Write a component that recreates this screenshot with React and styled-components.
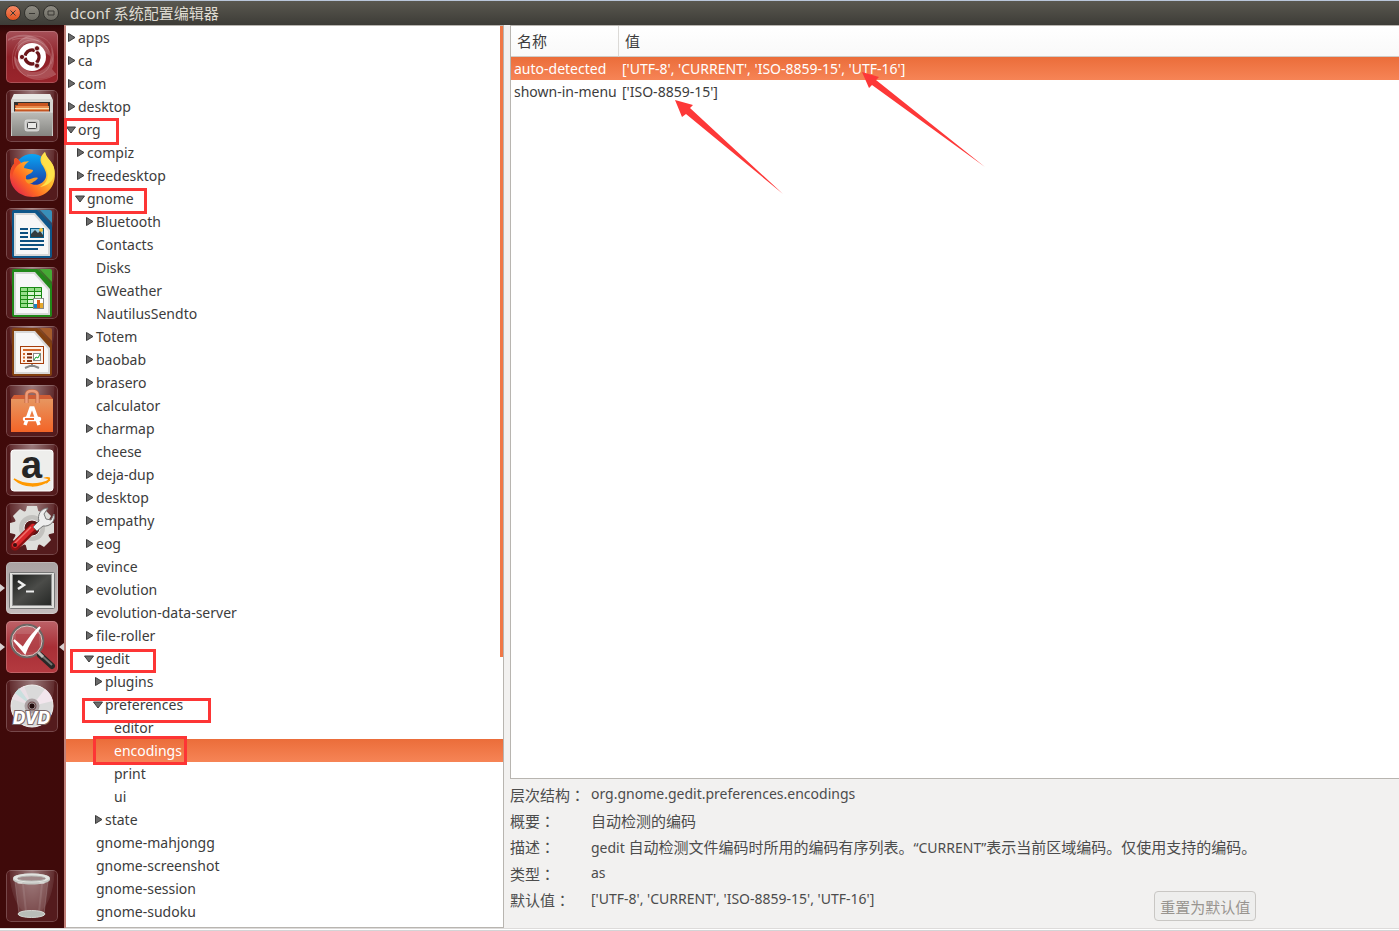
import React, { useState } from "react";
import styled, { createGlobalStyle } from "styled-components";

const GlobalStyle = createGlobalStyle`
  * {
    box-sizing: border-box;
  }
  body {
    margin: 0;
    font-family: "Noto Sans", "Noto Sans CJK SC", sans-serif;
    font-size: 14px;
    color: #3c3c3c;
    background-color: #f2f1f0;
  }
  button {
    font-family: inherit;
  }
`;

const Desktop = styled.div`
  position: relative;
  display: flex;
  flex-direction: column;
  height: 100vh;
  overflow: hidden;
`;

const TitleBar = styled.header`
  display: flex;
  align-items: center;
  flex-shrink: 0;
  gap: 3px;
  height: 25px;
  padding-left: 5px;
  border-top: 1px solid #b9c6da;
  background: linear-gradient(#5a5850, #3d3c37);
`;

const WindowButton = styled.button`
  display: flex;
  align-items: center;
  justify-content: center;
  width: 16px;
  height: 16px;
  padding: 0;
  border: 1px solid #33322e;
  border-radius: 50%;
  color: #3a3834;
  background: ${(props) =>
    props.$close
      ? "linear-gradient(#f58a66, #e2521f)"
      : "linear-gradient(#8f8c83, #6c6a62)"};
`;

const Title = styled.h1`
  margin: 0;
  padding-left: 8px;
  font-size: 15px;
  font-weight: 400;
  line-height: 24px;
  color: #dfdbd2;
`;

const Body = styled.div`
  display: flex;
  flex: 1;
  min-height: 0;
`;

const Launcher = styled.nav`
  display: flex;
  flex-direction: column;
  flex-shrink: 0;
  gap: 7px;
  width: 66px;
  padding: 6px;
  border-right: 2px solid #c08078;
  background: linear-gradient(#2c0707, #400a0a 8px, #3f0a0a);
`;

const LauncherItem = styled.button`
  position: relative;
  display: block;
  flex-shrink: 0;
  width: 52px;
  height: 52px;
  margin-top: ${(props) => (props.$last ? "auto" : "0")};
  padding: 0;
  border: none;
  border-radius: 5px;
  background: ${(props) => props.$tint};
  box-shadow: inset 0 0 0 1px rgba(255, 255, 255, 0.2);

  svg {
    display: block;
  }
`;

const Pip = styled.span`
  position: absolute;
  top: 22px;
  ${(props) => props.$side}: -6px;
  border: 4px solid transparent;
  border-width: 4px 5px;
  border-${(props) => props.$side}-color: #d8d0d0;
  border-${(props) => (props.$side === "left" ? "right" : "left")}-width: 0;
`;

const TreePane = styled.section`
  position: relative;
  width: 438px;
  flex-shrink: 0;
  border: solid #b8b5b0;
  border-width: 1px 1px 1px 0;
  background-color: #ffffff;
  overflow: hidden;
`;

const TreeList = styled.ul`
  margin: 0;
  padding: 0;
  list-style: none;
`;

const TreeRow = styled.button`
  display: flex;
  align-items: center;
  gap: 2px;
  width: 100%;
  height: 23px;
  padding: 0 0 0 ${(props) => 1 + props.$level * 9}px;
  border: none;
  font-size: 14px;
  line-height: 23px;
  text-align: left;
  color: ${(props) => (props.$selected ? "#ffffff" : "#3c3c3c")};
  background: ${(props) =>
    props.$selected ? "linear-gradient(#eb6d3a, #f68456)" : "transparent"};
`;

const Expander = styled.svg`
  width: 9px;
  height: 11px;
  flex-shrink: 0;
  overflow: visible;
`;

const ScrollThumb = styled.div`
  position: absolute;
  top: 0;
  right: 0;
  width: 3px;
  height: 70%;
  background-color: #f07746;
`;

const Content = styled.main`
  display: flex;
  flex-direction: column;
  flex: 1;
  min-width: 0;
  padding-left: 6px;
`;

const TablePane = styled.section`
  flex: 1;
  border: solid #b8b5b0;
  border-width: 1px 0 1px 1px;
  background-color: #ffffff;
`;

const KeyTable = styled.table`
  width: 100%;
  border-collapse: separate;
  border-spacing: 0;
  table-layout: fixed;
`;

const HeadCell = styled.th`
  width: ${(props) => props.$width || "auto"};
  height: 31px;
  padding: 0 6px;
  border-bottom: 1px solid #cfccc8;
  border-right: ${(props) => (props.$width ? "1px solid #dcdad7" : "none")};
  font-size: 15px;
  font-weight: 400;
  line-height: 30px;
  text-align: left;
  background: linear-gradient(#ffffff, #f9f9f9);
`;

const KeyRow = styled.tr`
  color: ${(props) => (props.$selected ? "#ffffff" : "#3c3c3c")};
  background: ${(props) =>
    props.$selected ? "linear-gradient(#eb6d3a, #f68456)" : "transparent"};
`;

const Cell = styled.td`
  height: 23px;
  padding: 0 3px;
  line-height: 23px;
  white-space: nowrap;
`;

const Details = styled.dl`
  display: grid;
  grid-template-columns: 81px max-content;
  margin: 0;
  padding: 3px 0 7px;
  font-size: 15px;
  line-height: 26px;
  color: #4c4c4c;
`;

const Term = styled.dt`
  margin: 0;
`;

// the TC face centres the fullwidth colon in its box
const Colon = styled.span`
  font-family: "Noto Sans CJK TC", sans-serif;
`;

const Value = styled.dd`
  margin: 0;
`;

const LatinValue = styled(Value)`
  display: flex;
  align-items: flex-start;
  justify-content: space-between;
  font-size: 14px;
  line-height: 24px;
`;

const Latin = styled.span`
  font-size: 14px;
`;

const ResetButton = styled.button`
  height: 30px;
  margin-top: 4px;
  padding: 0 5px;
  border: 1px solid #c9c7c4;
  border-radius: 4px;
  font-size: 15px;
  color: #98948f;
  background-color: #eeeeed;
`;

const BottomEdge = styled.footer`
  flex-shrink: 0;
  height: 3px;
  border-top: 1px solid #dddbda;
  border-bottom: 1px solid #d4d4d6;
  background-color: #ffffff;
`;

const Marks = styled.svg`
  position: absolute;
  top: 0;
  left: 0;
  width: 100%;
  height: 100%;
  pointer-events: none;
`;

const UbuntuIcon = () => (
  <svg width="52" height="52" viewBox="0 0 52 52">
    <g fill="none" stroke="#f4c8c8">
      <path d="M8 38C2 18 14 4 30 5c14 1 21 15 15 28" strokeOpacity=".2" />
      <path d="M6 9c20-6 38 3 39 18 0 13-11 20-24 17" strokeOpacity=".25" />
      <path d="M50 43C32 55 10 46 9 27 9 14 20 6 33 10" strokeOpacity=".25" />
    </g>
    <path d="M2 8C18-2 43 6 44 25L37 20C30 8 17 8 12 22 10 12 14 7 20 6 13 5 7 7 2 10z" fill="#fff" opacity=".2" />
    <path d="M50 43C31 54 6 45 8 25l6 6c4 12 20 14 29 2 3-8 4-16-1-22 6 8 8 18 4 27z" fill="#fff" opacity=".2" />
    <circle cx="26" cy="26" r="14" fill="#fff" />
    <circle cx="26" cy="26" r="7" fill="none" stroke="#6b1418" strokeWidth="3.4" strokeDasharray="12.66 2" strokeDashoffset="-1" transform="rotate(-60 26 26)" />
    <g fill="#6b1418" stroke="#fff" strokeWidth=".8">
      <circle cx="16" cy="26" r="2.6" />
      <circle cx="31" cy="17.3" r="2.6" />
      <circle cx="31" cy="34.7" r="2.6" />
    </g>
  </svg>
);

const FilesIcon = () => (
  <svg width="52" height="52" viewBox="0 0 52 52">
    <defs>
      <linearGradient id="cab" x2="0" y2="1">
        <stop stopColor="#bcbcb8" />
        <stop offset="1" stopColor="#858581" />
      </linearGradient>
    </defs>
    <path d="M8 4h36l3 6v36H5V10z" fill="#d5d5d1" />
    <path d="M8 4h36l2 5H6z" fill="#e9e9e6" />
    <rect x="8" y="12" width="36" height="14" fill="#33302e" />
    <path d="M12 13h30v8H9v-6h3z" fill="#c9551f" />
    <path d="M10 16h33v7H10z" fill="#e98b4d" />
    <path d="M9 18h34v1H9z" fill="#f9ddaa" />
    <path d="M9 20h34v2H9z" fill="#c45522" />
    <path d="M7 22h38l2 1-1 23H6L5 23z" fill="url(#cab)" />
    <path d="M6 22h40" stroke="#ddd" />
    <rect x="19" y="30" width="14" height="11" rx="2" fill="#c9c9c6" stroke="#eee" strokeWidth=".7" />
    <rect x="21.500" y="32.500" width="9" height="6" rx="1" fill="#e9e9e7" stroke="#484848" />
  </svg>
);

const FirefoxIcon = () => (
  <svg width="52" height="52" viewBox="0 0 52 52">
    <defs>
      <linearGradient id="fox" x1=".95" y1=".1" x2=".1" y2=".9">
        <stop stopColor="#fff35a" />
        <stop offset=".4" stopColor="#ffb52c" />
        <stop offset=".7" stopColor="#ff6a22" />
        <stop offset="1" stopColor="#e3254a" />
      </linearGradient>
      <linearGradient id="globe" x2="0" y2="1">
        <stop stopColor="#0aa6f5" />
        <stop offset="1" stopColor="#1b2d9b" />
      </linearGradient>
    </defs>
    <circle cx="26" cy="23" r="18" fill="url(#globe)" />
    <path d="M9 9c2 0 5 3 6 5 3-2 5-1 8-2-3 3-5 4-5 7 3 1 6 1 9 2 0 3-5 4-7 6 0 3 0 5 3 7 7 4 15 1 17-6 1-4-1-7-3-11-4-5-3-10 2-14 1 6 7 9 9 16 4 16-6 29-21 29C12 48 3 37 4 25c0-5 2-8 4-10 0-2 0-4 1-6z" fill="url(#fox)" />
    <path d="M9 9c2 0 5 3 6 5-5 2-8 8-9 14-2-6-1-10 2-13 0-2 0-4 1-6z" fill="#f14b26" />
    <path d="M39 3c-4 6-4 10 0 15 5 8 3 16-5 20 13-2 17-13 13-22-3-6-7-7-8-13z" fill="#ffe24a" />
    <path d="M19 30c5 2 9-3 13-1-2 3-4 3-6 5-3 2-6 0-7-4z" fill="#f59b25" />
  </svg>
);

const DocumentIcon = ({ color, dark, children }) => (
  <svg width="52" height="52" viewBox="0 0 52 52">
    <path d="M8 2h23l15 16v30a2 2 0 0 1-2 2H8a2 2 0 0 1-2-2V4a2 2 0 0 1 2-2z" fill={dark} />
    <path d="M30 2h4l12 13v5z" fill={dark} opacity=".7" />
    <path d="M8 5h21l15 17v26H8z" fill="#d8d8d8" />
    <path d="M10 7h18l14 16v23H10z" fill="#f7f7f7" />
    <path d="M34 2h10a2 2 0 0 1 2 2v11z" fill={color} />
    <g transform="translate(-6 0)">{children}</g>
  </svg>
);

const WriterIcon = () => (
  <DocumentIcon color="#388fba" dark="#0e5689">
    <path d="M20 21h8M20 25h8M20 29h8M20 33h24M20 37h24M20 41h18" stroke="#0d5080" strokeWidth="2" />
    <rect x="30.500" y="20.500" width="13" height="9" fill="#96cae2" stroke="#075b87" />
    <circle cx="41" cy="22" r="2" fill="#f0c143" />
    <path d="M31 29v-3l4-4 3 3 2-2 3 4v2z" fill="#343c3e" />
  </DocumentIcon>
);

const CalcIcon = () => (
  <DocumentIcon color="#45aa35" dark="#218819">
    <path d="M20 20h22v21H20z" fill="#d8f5d2" />
    <path d="M20 20h22v4H20zM20 24h7v17h-7z" fill="#96dd89" />
    <path d="M20.500 20.500h21v20h-21zM20 24.500h22M20 28.500h22M20 32.500h22M20 36.500h22M27.500 20v21M34.500 20v21" fill="none" stroke="#198913" />
    <rect x="33.500" y="31.500" width="10" height="10" fill="#fff" stroke="#888" />
    <path d="M34 37h3v4h-3z" fill="#1685c5" />
    <path d="M37 33h3v8h-3z" fill="#d75c16" />
    <path d="M40 36h3v5h-3z" fill="#e5a92e" />
  </DocumentIcon>
);

const ImpressIcon = () => (
  <DocumentIcon color="#a65c2b" dark="#824010">
    <rect x="20.500" y="20.500" width="23" height="17" fill="#fff2e8" stroke="#a53d0b" />
    <path d="M23 24h18" stroke="#d36829" strokeWidth="2" />
    <path d="M23 28h2M23 31.500h2M23 35h2" stroke="#d36829" strokeWidth="2" />
    <path d="M27 28h5M27 31.500h5M27 35h5" stroke="#813414" strokeWidth="2" />
    <rect x="33.500" y="27.500" width="7" height="7" fill="#fff" stroke="#888" />
    <path d="m34 34 2-3 2 1 2-4" fill="none" stroke="#15a52a" />
    <path d="M32 38v3M25 42l7-3 7 3" fill="none" stroke="#888" strokeWidth="2" />
  </DocumentIcon>
);

const SoftwareIcon = () => (
  <svg width="52" height="52" viewBox="0 0 52 52">
    <defs>
      <linearGradient id="bag" x2="0" y2="1">
        <stop stopColor="#e79660" />
        <stop offset="1" stopColor="#f36427" />
      </linearGradient>
    </defs>
    <path d="M5 14 8 10h36l3 4z" fill="#d05d35" />
    <path d="M5 14h42v33H5z" fill="url(#bag)" />
    <path d="M20.500 18V10q0-4 5.500-4t5.500 4v8" fill="none" stroke="#bc6544" strokeWidth="4" />
    <path d="M20.500 18V10q0-4 5.500-4t5.500 4v8" fill="none" stroke="#ef9c78" strokeWidth="2.500" />
    <path d="m19 40 6-17h2l6 17" fill="none" stroke="#fff" strokeWidth="3.500" />
    <path d="M19 34h14" stroke="#fff" strokeWidth="4.500" strokeLinecap="round" />
    <path d="M19 34h9" stroke="#ef6b32" strokeWidth="2" />
  </svg>
);

const LetterA = styled.text`
  font-family: "Liberation Sans", sans-serif;
  font-size: 38px;
  font-weight: 700;
`;

const AmazonIcon = () => (
  <svg width="52" height="52" viewBox="0 0 52 52">
    <rect x="5" y="6" width="42" height="41" rx="3" fill="#eeeeec" stroke="#fff" />
    <LetterA x="15" y="34" fill="#252525">
      a
    </LetterA>
    <path d="M8 35c10 9 25 9 36 1-10 5-25 6-36-1z" fill="#ff9900" stroke="#ff9900" strokeWidth="1.500" />
    <path d="M37 34c5-2 8-1 7 1s-2 4-4 5l2-5z" fill="#ff9900" />
  </svg>
);

const SettingsIcon = () => (
  <svg width="52" height="52" viewBox="0 0 52 52">
    <g transform="translate(26 25)" fill="#dededb">
      {[0, 45, 90, 135, 180, 225, 270, 315].map((angle) => (
        <path key={angle} d="m-5-22h10l2 8h-14z" transform={`rotate(${angle})`} />
      ))}
      <circle r="18" />
      <circle r="13" fill="#c2c1be" />
      <circle r="8" fill="#571718" stroke="#eee" />
    </g>
    <path d="m9 43 18-18" stroke="#8c1012" strokeWidth="9" strokeLinecap="round" />
    <path d="m9 42 18-18" stroke="#d9272b" strokeWidth="6" strokeLinecap="round" />
    <path d="m8 41 17-17" stroke="#f0726d" strokeWidth="1.500" />
    <path d="m27 24 6-6c-2-6 2-13 9-13l-4 6 2 5 5 1 3-6c2 7-4 13-11 12l-6 5z" fill="#eee" stroke="#777" />
    <circle cx="9" cy="42" r="2" fill="#3f1010" />
  </svg>
);

const TerminalIcon = () => (
  <svg width="52" height="52" viewBox="0 0 52 52">
    <defs>
      <linearGradient id="term" x2="1" y2="1">
        <stop stopColor="#1c1e1c" />
        <stop offset=".5" stopColor="#4b4c49" />
        <stop offset="1" stopColor="#252725" />
      </linearGradient>
    </defs>
    <rect x="3.500" y="10.500" width="45" height="36" rx="1" fill="#e1e1de" stroke="#777" />
    <rect x="6.500" y="12.500" width="39" height="31" fill="url(#term)" stroke="#929292" />
    <path d="m12 19 6 4-6 4" fill="none" stroke="#eee" strokeWidth="2.500" />
    <path d="M20 29.500h8" stroke="#eee" strokeWidth="2" />
  </svg>
);

const DconfIcon = () => (
  <svg width="52" height="52" viewBox="0 0 52 52">
    <path d="M10 13h23v18H10z" fill="#a51f28" opacity=".6" />
    <circle cx="21" cy="20" r="16" fill="#fff" fillOpacity=".12" stroke="#6d6664" strokeWidth="2.500" />
    <circle cx="21" cy="20" r="15" fill="none" stroke="#d8c5c2" />
    <path d="m8 19 9 8c5-8 10-15 17-21-8 11-12 18-15 26z" fill="#fff" stroke="#fff" strokeWidth="2" />
    <path d="m34 34 12 11" stroke="#282827" strokeWidth="6" strokeLinecap="round" />
    <path d="m34 33 12 11" stroke="#777673" strokeWidth="2" />
    <path d="m32 31 5 5" stroke="#bdbab7" strokeWidth="3" />
  </svg>
);

const DvdText = styled.text`
  font-family: Inter, sans-serif;
  font-size: 17px;
  font-style: italic;
  font-weight: 800;
`;

const DvdIcon = () => (
  <svg width="52" height="52" viewBox="0 0 52 52">
    <circle cx="26" cy="26" r="21" fill="#dadada" stroke="#f2f2f0" />
    <path d="M26 26 6 19q4-10 12-13z" fill="#eadfe5" />
    <path d="m26 26 13-17q6 4 8 12z" fill="#f2e6ed" />
    <path d="M26 26 9 13l4-5zM26 26l18 9-4 6z" fill="#bcdedb" opacity=".7" />
    <circle cx="26" cy="26" r="6" fill="#6c4b4c" stroke="#aca1a3" strokeWidth="3" />
    <circle cx="26" cy="26" r="3" fill="#210c0d" stroke="#eee" strokeWidth=".5" />
    <DvdText x="7" y="44" fill="#fff" stroke="#766363" strokeWidth="2" paintOrder="stroke">
      DVD
    </DvdText>
  </svg>
);

const TrashIcon = () => (
  <svg width="52" height="52" viewBox="0 0 52 52">
    <path d="M9 11h33l-4 33H13z" fill="#c8a6a8" fillOpacity=".25" stroke="#a58a8b" strokeOpacity=".4" />
    <path d="m17 14 3 28M36 14l-3 28" stroke="#fff" strokeOpacity=".1" strokeWidth="2" />
    <ellipse cx="25.500" cy="44" rx="13.500" ry="3.500" fill="#b9bdb8" stroke="#d4d6d2" />
    <path d="M7 8c0-6 37-6 37 0v2c-3 6-34 6-37 0z" fill="#c4c6c2" />
    <path d="M14 12v2M36 12v2" stroke="#f4f4f2" strokeWidth="5" opacity=".4" />
    <ellipse cx="25.500" cy="8" rx="18" ry="4.500" fill="#e2e3e0" />
    <ellipse cx="25.500" cy="8.500" rx="14" ry="2.500" fill="#a08889" stroke="#b4b5b1" />
  </svg>
);

const glass =
  "radial-gradient(ellipse at 50% 0, rgba(255,255,255,.42), rgba(255,255,255,.08) 60%, transparent 62%), #541b1d";

const launcherItems = [
  { name: "Dash", Icon: UbuntuIcon, tint: "linear-gradient(#a65058, #8f2027 50%, #9a252c)" },
  { name: "Files", Icon: FilesIcon, tint: glass },
  { name: "Firefox", Icon: FirefoxIcon, tint: glass },
  { name: "LibreOffice Writer", Icon: WriterIcon, tint: glass },
  { name: "LibreOffice Calc", Icon: CalcIcon, tint: glass },
  { name: "LibreOffice Impress", Icon: ImpressIcon, tint: glass },
  { name: "Ubuntu Software", Icon: SoftwareIcon, tint: glass },
  { name: "Amazon", Icon: AmazonIcon, tint: glass },
  { name: "System Settings", Icon: SettingsIcon, tint: glass },
  { name: "Terminal", Icon: TerminalIcon, tint: "linear-gradient(#aaa3a3, #b5adad 50%, #c5bdbd)", running: true },
  { name: "dconf", Icon: DconfIcon, tint: "linear-gradient(#bd6268, #a92f36 50%, #b43a40)", running: true, active: true },
  { name: "DVD", Icon: DvdIcon, tint: glass },
];

// [name, level, state]
const treeItems = [
  ["apps", 0, "closed"],
  ["ca", 0, "closed"],
  ["com", 0, "closed"],
  ["desktop", 0, "closed"],
  ["org", 0, "open"],
  ["compiz", 1, "closed"],
  ["freedesktop", 1, "closed"],
  ["gnome", 1, "open"],
  ["Bluetooth", 2, "closed"],
  ["Contacts", 2],
  ["Disks", 2],
  ["GWeather", 2],
  ["NautilusSendto", 2],
  ["Totem", 2, "closed"],
  ["baobab", 2, "closed"],
  ["brasero", 2, "closed"],
  ["calculator", 2],
  ["charmap", 2, "closed"],
  ["cheese", 2],
  ["deja-dup", 2, "closed"],
  ["desktop", 2, "closed"],
  ["empathy", 2, "closed"],
  ["eog", 2, "closed"],
  ["evince", 2, "closed"],
  ["evolution", 2, "closed"],
  ["evolution-data-server", 2, "closed"],
  ["file-roller", 2, "closed"],
  ["gedit", 2, "open"],
  ["plugins", 3, "closed"],
  ["preferences", 3, "open"],
  ["editor", 4],
  ["encodings", 4],
  ["print", 4],
  ["ui", 4],
  ["state", 3, "closed"],
  ["gnome-mahjongg", 2],
  ["gnome-screenshot", 2],
  ["gnome-session", 2],
  ["gnome-sudoku", 2],
];

const keys = [
  ["auto-detected", "['UTF-8', 'CURRENT', 'ISO-8859-15', 'UTF-16']"],
  ["shown-in-menu", "['ISO-8859-15']"],
];

const marks = [
  [64, 118, 55, 27],
  [69, 188, 78, 26],
  [70, 649, 86, 24],
  [82, 698, 129, 25],
  [93, 736, 94, 29],
];

const Label = ({ children }) => (
  <Term>
    {children}
    <Colon>：</Colon>
  </Term>
);

const App = () => {
  const [selectedNode, setSelectedNode] = useState(31);
  const [selectedKey, setSelectedKey] = useState(0);

  return (
    <Desktop>
      <GlobalStyle />
      <TitleBar>
        <WindowButton $close aria-label="关闭">
          <svg width="8" height="8" viewBox="0 0 8 8" stroke="currentColor">
            <path d="m1.500 1.500 5 5m0-5-5 5" />
          </svg>
        </WindowButton>
        <WindowButton aria-label="最小化">
          <svg width="8" height="8" viewBox="0 0 8 8" stroke="currentColor">
            <path d="M1 4.500h6" />
          </svg>
        </WindowButton>
        <WindowButton aria-label="最大化">
          <svg width="8" height="8" viewBox="0 0 8 8" stroke="currentColor">
            <path d="M1 2h6v4h-6z" fill="none" />
          </svg>
        </WindowButton>
        <Title>dconf 系统配置编辑器</Title>
      </TitleBar>

      <Body>
        <Launcher>
          {launcherItems.map(({ name, Icon, tint, running, active }) => (
            <LauncherItem key={name} $tint={tint} aria-label={name}>
              <Icon />
              {running && <Pip $side="left" />}
              {active && <Pip $side="right" />}
            </LauncherItem>
          ))}
          <LauncherItem $last $tint={glass} aria-label="Trash">
            <TrashIcon />
          </LauncherItem>
        </Launcher>

        <TreePane>
          <TreeList>
            {treeItems.map(([name, level, state], index) => (
              <li key={index}>
                <TreeRow
                  $level={level}
                  $selected={index === selectedNode}
                  onClick={() => setSelectedNode(index)}
                >
                  <Expander viewBox="0 0 9 11">
                    {state && (
                      <path
                        d={state === "open" ? "M-.5 3h9l-4.500 6z" : "M1.500 1.500v8l6.500-4z"}
                        fill="#6b6b6b"
                        stroke="#3c3c3c"
                      />
                    )}
                  </Expander>
                  {name}
                </TreeRow>
              </li>
            ))}
          </TreeList>
          <ScrollThumb />
        </TreePane>

        <Content>
          <TablePane>
            <KeyTable>
              <thead>
                <tr>
                  <HeadCell $width="108px">名称</HeadCell>
                  <HeadCell>值</HeadCell>
                </tr>
              </thead>
              <tbody>
                {keys.map(([name, value], index) => (
                  <KeyRow
                    key={name}
                    $selected={index === selectedKey}
                    onClick={() => setSelectedKey(index)}
                  >
                    <Cell>{name}</Cell>
                    <Cell>{value}</Cell>
                  </KeyRow>
                ))}
              </tbody>
            </KeyTable>
          </TablePane>

          <Details>
            <Label>层次结构</Label>
            <LatinValue>org.gnome.gedit.preferences.encodings</LatinValue>
            <Label>概要</Label>
            <Value>自动检测的编码</Value>
            <Label>描述</Label>
            <Value>
              <Latin>gedit </Latin>
              自动检测文件编码时所用的编码有序列表。
              <Latin>“CURRENT”</Latin>
              表示当前区域编码。仅使用支持的编码。
            </Value>
            <Label>类型</Label>
            <LatinValue>as</LatinValue>
            <Label>默认值</Label>
            <LatinValue>
              {keys[0][1]}
              <ResetButton disabled>重置为默认值</ResetButton>
            </LatinValue>
          </Details>
        </Content>
      </Body>
      <BottomEdge />

      <Marks>
        {marks.map(([x, y, width, height]) => (
          <rect
            key={y}
            x={x + 1.5}
            y={y + 1.5}
            width={width - 3}
            height={height - 3}
            fill="none"
            stroke="#fd3535"
            strokeWidth="3"
          />
        ))}
        <path d="M675 100 693 105 690 108 783 194 686 114 682 117z" fill="#fd3838" />
        <path d="M862 72 879 77 876 80 985 167 872 85 869 88z" fill="#fd3838" />
      </Marks>
    </Desktop>
  );
};

export default App;
